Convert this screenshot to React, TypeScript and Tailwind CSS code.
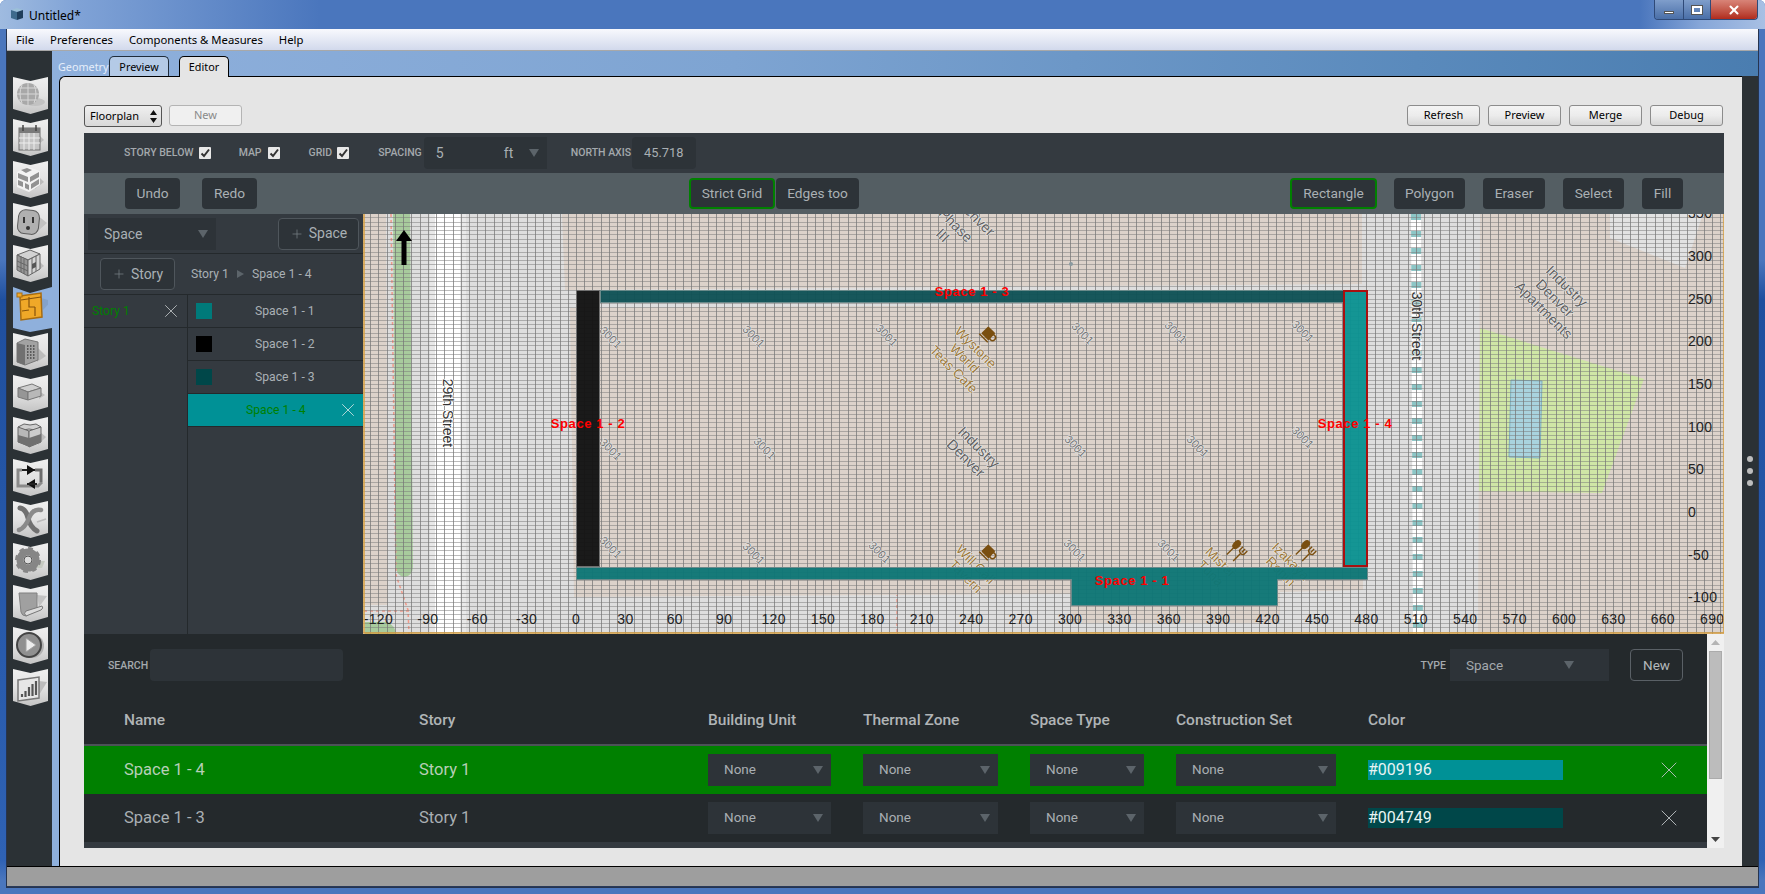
import { X, Plus } from 'lucide-react'
import type { ReactNode } from 'react'

const Tri = ({ className = '' }: { className?: string }) => (
  <svg width="10" height="8" viewBox="0 0 10 8" className={className}>
    <path d="M0 0h10L5 8z" fill="#5c646a" />
  </svg>
)

function ToolBtn({ children, active, className = '' }: { children: ReactNode; active?: boolean; className?: string }) {
  return (
    <div className={`h-[31px] flex items-center justify-center rounded-[4px] bg-[#2d3338] text-[13.7px] text-[#aab0b4] ${active ? 'border-2 border-[#008000]' : ''} ${className}`}>
      {children}
    </div>
  )
}

function WinBtn({ children }: { children: ReactNode }) {
  return (
    <div className="w-[73px] h-[21px] flex items-center justify-center rounded-[3px] border border-[#8c8c8c] bg-gradient-to-b from-[#f4f4f4] via-[#ececec] to-[#d6d6d6] text-[11px] text-black">
      {children}
    </div>
  )
}

function Check() {
  return (
    <div className="w-[12px] h-[12px] bg-[#e8e8e8] rounded-[1px] flex items-center justify-center">
      <svg width="10" height="10" viewBox="0 0 10 10">
        <path d="M1.5 5.5l2.5 2.5 5-6.5" fill="none" stroke="#333" strokeWidth="2" />
      </svg>
    </div>
  )
}

const Label = ({ children, className = '' }: { children: ReactNode; className?: string }) => (
  <span className={`text-[10.5px] font-medium text-[#a4a9ad] whitespace-nowrap ${className}`}>{children}</span>
)

function Drop({ className }: { className: string }) {
  return (
    <div className={`h-[32px] bg-[#2d3338] flex items-center justify-between pl-[16px] pr-[8px] pb-[1px] text-[13.5px] text-[#a9afb3] ${className}`}>
      None
      <Tri />
    </div>
  )
}

function TableRow({ name, color, bar, active }: { name: string; color: string; bar: string; active?: boolean }) {
  return (
    <div className={`h-[48px] grid grid-cols-[295px_289px_155px_167px_146px_192px_1fr] items-center pl-[40px] text-[16.5px] ${active ? 'bg-[#008000] text-[#b7cfb7]' : 'bg-[#24292c] text-[#a9afb3]'}`}>
      <div>{name}</div>
      <div>Story 1</div>
      <Drop className="w-[123px]" />
      <Drop className="w-[135px]" />
      <Drop className="w-[114px]" />
      <Drop className="w-[160px]" />
      <div className="flex items-center">
        <div className={`w-[195px] h-[20px] text-[16px] leading-[20px] text-[#e8f4f4] ${bar}`}>{color}</div>
        <X size={28} strokeWidth={0.8} className="ml-[92px] text-[#b9bdbf]" />
      </div>
    </div>
  )
}

const shadow = <path d="M22 12l9 9-9 7z" fill="#bcbcbc" />

const icons: ReactNode[] = [
  <>
    <ellipse cx="22" cy="25" rx="10" ry="4" fill="#c2c2c2" />
    <circle cx="15" cy="17" r="11" fill="#a8a8a8" />
    <path d="M4 17h22M6 11h18M6 23h18M15 6v22M9 8q-4 9 0 18M21 8q4 9 0 18" fill="none" stroke="#d8d8d8" strokeWidth="1" />
  </>,
  <>
    {shadow}
    <rect x="6" y="9" width="21" height="22" fill="#c4c4c4" stroke="#6e6e6e" />
    <rect x="6" y="9" width="21" height="5" fill="#7a7a7a" />
    <path d="M6 19h21M6 24h21M11 14v17M16 14v17M21 14v17" stroke="#eee" />
    <path d="M10 6v6M23 6v6" stroke="#444" strokeWidth="1.5" />
  </>,
  <>
    {shadow}
    <path d="M4 11l11-5 12 4v14l-11 7-12-5z" fill="#f3f3f3" />
    <path d="M5 12l10 4v5L5 17zM17 16l9-5v5l-9 5zM5 19l5 2v5l-5-2zM12 22l4 2v5l-4-2zM18 23l8-5v5l-8 5zM8 9l6-2 5 2-6 3z" fill="#929292" />
  </>,
  <>
    <path d="M24 12l10 8-9 8z" fill="#c2c2c2" />
    <rect x="5" y="7" width="21" height="24" rx="7" fill="#b0b0b0" stroke="#5c5c5c" transform="rotate(6 15 19)" />
    <path d="M11 14v6M20 14v6" stroke="#333" strokeWidth="2" />
    <circle cx="15" cy="25" r="2" fill="#333" />
  </>,
  <>
    {shadow}
    <path d="M4 10l13-5 10 4-12 6z" fill="#d2d2d2" stroke="#666" />
    <path d="M4 10l11 5v16L4 25z" fill="#969696" stroke="#666" />
    <path d="M15 15l12-6v15l-12 7z" fill="#d4d4d4" stroke="#666" />
    <path d="M8 12v15M11 14v15M4 16l11 5M4 21l11 5M19 13v16M23 11v15" stroke="#666" />
    <path d="M19 19l4-2v5l-4 2z" fill="#555" />
  </>,
  <>
    <path d="M28 11l10 3-8 9z" fill="#7f9cc2" opacity="0.7" />
    <path d="M7 9l21-3 1 24-21 3z" fill="#f0a828" stroke="#a86c10" strokeWidth="1.5" />
    <path d="M8 13l20-3M16 10v10h6M22 20v9M9 24l7-1" fill="none" stroke="#86530c" strokeWidth="1.2" />
    <rect x="4" y="6" width="5" height="4" fill="#f0a828" stroke="#a86c10" />
  </>,
  <>
    <path d="M24 14l9 9-9 6z" fill="#bcbcbc" />
    <path d="M4 10l8-4 13 3v18l-13 5-8-3z" fill="#a2a2a2" stroke="#777" />
    <path d="M4 10l8 2v20l-8-3z" fill="#707070" />
    <path d="M14 13h9M14 16h9M14 19h9M14 22h9M14 25h9" stroke="#444" strokeWidth="1.5" strokeDasharray="1.5 1.5" />
  </>,
  <>
    <path d="M26 16l6 4-6 4z" fill="#bcbcbc" />
    <path d="M5 13l14-4 9 4-13 4z" fill="#cfcfcf" stroke="#777" />
    <path d="M5 13l10 4v8L5 22z" fill="#969696" stroke="#777" />
    <path d="M15 17l13-4v8l-13 4z" fill="#b8b8b8" stroke="#777" />
  </>,
  <>
    <path d="M26 14l7 6-8 8z" fill="#bcbcbc" />
    <path d="M5 10l6-3 6 1 6-1 5 3-6 3-6-1-6 1z" fill="#cfcfcf" stroke="#666" />
    <path d="M5 10l11 4v15L5 25z" fill="#b8b8b8" stroke="#666" />
    <path d="M16 14l12-4v15l-12 5z" fill="#cccccc" stroke="#666" />
    <path d="M5 18l11 3 12-4v8l-12 5-11-5z" fill="#707070" />
  </>,
  <>
    <path d="M9 11H5v16h20l4-4" fill="none" stroke="#8a8a8a" strokeWidth="3" />
    <path d="M22 11h6v12" fill="none" stroke="#6c6c6c" strokeWidth="3" />
    <path d="M9 11h13" stroke="#222" strokeWidth="2" />
    <path d="M14 6l8 5-8 5zM22 20l-8 5 8 5z" fill="#111" />
    <path d="M14 25h10" stroke="#222" strokeWidth="2" />
  </>,
  <>
    <path d="M7 7q6 1 8 10t9 13" fill="none" stroke="#707070" strokeWidth="5" strokeLinecap="round" />
    <path d="M28 9q-8-2-12 8T6 29" fill="none" stroke="#8a8a8a" strokeWidth="4.5" strokeLinecap="round" />
    <path d="M24 21l9-3" stroke="#bbb" strokeWidth="1.5" />
  </>,
  <>
    <path d="M18 18h14l-3 7H18z" fill="#c6cac2" />
    <circle cx="15" cy="17" r="8" fill="none" stroke="#868686" strokeWidth="7" />
    <circle cx="15" cy="17" r="11" fill="none" stroke="#868686" strokeWidth="4" strokeDasharray="4.5 4.1" />
    <circle cx="15" cy="17" r="4" fill="#dcdcdc" stroke="#555" />
  </>,
  <>
    <path d="M24 10l10 1-8 11z" fill="#c2c2c2" />
    <path d="M6 8h18v17l-11 6q-4 0-5-4z" fill="#a0a0a0" stroke="#808080" />
    <path d="M13 31q-3-3 0-5l16-5q2 2-1 4z" fill="#dcdcdc" stroke="#777" />
  </>,
  <>
    <circle cx="19" cy="19" r="12" fill="#b2b2b2" />
    <circle cx="16" cy="18" r="12" fill="#909090" stroke="#444" strokeWidth="2" />
    <path d="M13 11l10 7-10 7z" fill="#ededed" stroke="#a0a0a0" />
  </>,
  <>
    <path d="M26 12l8 1-8 13z" fill="#bcbcbc" />
    <path d="M5 11l21-3v21l-21 3z" fill="#e6e6e6" stroke="#777" strokeWidth="1.5" />
    <path d="M9 28v-3M12.500 28v-6M16 27v-9M19.500 27v-12M23 26v-14" stroke="#555" strokeWidth="2.2" />
  </>,
]

function Sidebar() {
  return (
    <div className="w-[45px] shrink-0 bg-[#2b3135] pl-[6px] pt-[26px]">
      {icons.map((icon, i) =>
        i === 5 ? (
          <div key={i} className="w-[39px] h-[46px] -mt-[4px] bg-[#8fb0dc] [clip-path:polygon(0_0,17px_6px,39px_0,39px_41px,17px_45px,0_41px)]">
            <svg width="35" height="37" viewBox="0 0 35 37" className="mt-[4px]">{icon}</svg>
          </div>
        ) : (
          <div key={i} className="h-[42px]">
            <div className="w-[35px] h-[37px] bg-gradient-to-b from-[#efefef] via-[#e2e2e2] to-[#c4c4c4] [clip-path:polygon(0_0,50%_4px,100%_0,100%_32px,50%_37px,0_32px)]">
              <svg width="35" height="37" viewBox="0 0 35 37">{icon}</svg>
            </div>
          </div>
        ),
      )}
    </div>
  )
}

const gridX = Array.from({ length: 170 }, (_, i) => Math.round(576 + (i - 26) * 8.233) + 0.5)
const gridY = Array.from({ length: 100 }, (_, i) => Math.round(512 + (i - 70) * 4.27) + 0.5)
const xLabels = Array.from({ length: 28 }, (_, i) => -120 + i * 30)
const yLabels = [350, 300, 250, 200, 150, 100, 50, 0, -50, -100]
const numbers = [[610, 338], [753, 337], [610, 450], [764, 449], [610, 548], [753, 554], [886, 336], [1082, 334], [1175, 333], [1302, 332], [1075, 447], [1197, 447], [1302, 438], [879, 553], [1074, 551], [1168, 551]]

const brown: [string, number, number][] = [
  ['Wystone', 975, 348], ['World', 964, 359], ['Teas Cafe', 953, 370],
  ['Will Call', 975, 565], ['Tavern', 965, 577],
  ['Mister', 1220, 563], ['Tuna', 1210, 574],
  ['Izakaya', 1290, 562], ['Ronin', 1280, 572],
]
const grey: [string, number, number][] = [
  ['Industry', 978, 448], ['Denver', 965, 459],
  ['Industry', 1566, 287], ['Denver', 1554, 299], ['Apartments', 1543, 311],
  ['Denver', 975, 218], ['Phase', 955, 226], ['III', 942, 236],
]
const spaces: [string, number, number][] = [
  ['Space 1 - 2', 588, 428], ['Space 1 - 3', 972, 296], ['Space 1 - 4', 1355, 428], ['Space 1 - 1', 1132, 585],
]

const Cup = ({ x, y }: { x: number; y: number }) => (
  <g transform={`translate(${x} ${y}) rotate(45)`} fill="#7a4f10">
    <rect x="-6" y="-5" width="10" height="10" rx="1" />
    <circle cx="5" cy="0" r="3" fill="none" stroke="#7a4f10" strokeWidth="1.5" />
    <rect x="-7" y="6" width="12" height="1.5" />
  </g>
)
const Fork = ({ x, y }: { x: number; y: number }) => (
  <g transform={`translate(${x} ${y}) rotate(45)`} stroke="#7a4f10" fill="#7a4f10">
    <ellipse cx="-4" cy="-5" rx="3" ry="4.500" />
    <path d="M-4 -1v10M5 -1v10M2 -8v5q3 3 6 0v-5M5 -8v5" strokeWidth="1.4" fill="none" />
  </g>
)

function MapCanvas() {
  return (
    <svg width="1361" height="420" viewBox="363 214 1361 420" className="block font-['Liberation_Sans',sans-serif]">
      <rect x="363" y="214" width="1361" height="420" fill="#dedede" />
      <path d="M363 214h23l2 391h-25z" fill="#dcd2ca" />
      <rect x="430" y="214" width="36" height="420" fill="#e8e8e8" />
      <rect x="435" y="214" width="25" height="420" fill="#fff" />
      <path d="M393 214h17l3 353a8.500 10 0 0 1-17 0z" fill="#a8cb9d" />
      <path d="M365 634v-12h22q8 3 9 12z" fill="#a8cb9d" />
      <path d="M391 214l5 361 12 35 1 24M364 611h46M897 593v41" fill="none" stroke="#f09a8a" strokeWidth="1.500" strokeDasharray="3 3" />
      <path d="M562 214h800v70l-797 6z" fill="#dcd2ca" />
      <path d="M570 308l793-5v287l-83 2v31h-209v-29l-497 3z" fill="#dcd2ca" />
      <path d="M1480 214h244v420h-246z" fill="#dcd2ca" />
      <path d="M1610 214v24l75 30 18-54z" fill="#e2e2e2" />
      <path d="M1480 328l164 51-42 114-123-2z" fill="#cfe6a6" />
      <path d="M1511 380l31 1-2 77-31-1z" fill="#a9d3de" stroke="#7fb0c0" />
      <path d="M1416 214l2 420" stroke="#fff" strokeWidth="10" />
      <path d="M1416 214l2 420" stroke="#8cc6c6" strokeWidth="10" strokeDasharray="6 11" />
      <g stroke="#777" strokeWidth="1">
        {gridX.map((x) => <line key={x} x1={x} x2={x} y1="214" y2="634" strokeOpacity="0.75" />)}
        {gridY.map((y) => <line key={y} x1="363" x2="1724" y1={y} y2={y} strokeOpacity="0.5" />)}
      </g>
      {numbers.map(([x, y], i) => (
        <text key={i} x={x} y={y} fontSize="11.500" fill="#747474" textAnchor="middle" dominantBaseline="middle" transform={`rotate(45 ${x} ${y})`} stroke="#eee" strokeWidth="1" paintOrder="stroke">3001</text>
      ))}
      {brown.map(([t, x, y], i) => (
        <text key={i} x={x} y={y} fontSize="13.500" fill="#9c7838" textAnchor="middle" dominantBaseline="middle" transform={`rotate(45 ${x} ${y})`} stroke="#eee" strokeWidth="1" paintOrder="stroke">{t}</text>
      ))}
      {grey.map(([t, x, y], i) => (
        <text key={i} x={x} y={y} fontSize="14.500" fill="#606060" textAnchor="middle" dominantBaseline="middle" transform={`rotate(45 ${x} ${y})`} stroke="#eee" strokeWidth="1" paintOrder="stroke">{t}</text>
      ))}
      <Cup x={989} y={334} />
      <Cup x={989} y={552} />
      <Fork x={1236} y={551} />
      <Fork x={1305} y={551} />
      <circle cx="1071" cy="264" r="2" fill="#8a9aa0" />
      <text x="447" y="413" fontSize="14" fill="#333" textAnchor="middle" dominantBaseline="middle" transform="rotate(90 447 413)" stroke="#fff" strokeWidth="1.500" paintOrder="stroke">29th Street</text>
      <text x="1416" y="326" fontSize="14" fill="#333" textAnchor="middle" dominantBaseline="middle" transform="rotate(90 1416 326)" stroke="#e8e8e8" strokeWidth="1.500" paintOrder="stroke">30th Street</text>
      <rect x="576.500" y="290.500" width="23" height="276" fill="#141414" fillOpacity="0.97" stroke="#707070" />
      <rect x="600.500" y="290.500" width="743" height="12" fill="#0f5155" fillOpacity="0.96" stroke="#6a8a8a" />
      <path d="M576.500 567.500h791v12h-90v26h-206v-26h-495z" fill="#0e7676" fillOpacity="0.96" stroke="#6a8a8a" />
      <rect x="1344" y="291" width="23" height="275" fill="#0b9292" fillOpacity="0.96" stroke="#a81010" strokeWidth="2" />
      <path d="M401.500 265v-24h-5.500l8-11 8 11h-5.500v24z" fill="#000" />
      {spaces.map(([t, x, y]) => (
        <text key={t} x={x} y={y} fontSize="13" fontWeight="700" letterSpacing="0.6" fill="#ff0000" textAnchor="middle">{t}</text>
      ))}
      {xLabels.map((v) => (
        <text key={v} x={576 + v * 1.6467} y="624" fontSize="14" fill="#222" textAnchor="middle" letterSpacing="0.3">{v}</text>
      ))}
      {yLabels.map((v) => (
        <text key={v} x="1688" y={517 - v * 0.854} fontSize="14" fill="#222" letterSpacing="0.3">{v}</text>
      ))}
      <path d="M364 214v419h1360V214" fill="none" stroke="#d8a040" strokeWidth="1.500" />
    </svg>
  )
}

function LeftPanel() {
  return (
    <div className="w-[279px] shrink-0 bg-[#343a40] flex flex-col text-[#a9b0b5]">
      <div className="h-[40px] flex items-center justify-between pl-[4px] pr-[4px] border-b border-[#24292c]">
        <div className="w-[128px] h-[32px] bg-[#2d3338] flex items-center justify-between pl-[16px] pr-[8px] pt-[1px] text-[14px]">
          Space
          <Tri />
        </div>
        <div className="w-[81px] h-[32px] rounded-[4px] border border-[#4f565c] bg-[#2d3338] flex items-center justify-center gap-[5px] text-[14px]">
          <Plus size={14} strokeWidth={1.2} className="text-[#7d848a]" />
          Space
        </div>
      </div>
      <div className="h-[41px] flex items-center pl-[16px] border-b border-[#24292c] text-[12.2px]">
        <div className="w-[75px] h-[32px] rounded-[4px] border border-[#4f565c] bg-[#2d3338] flex items-center justify-center gap-[5px] text-[14px]">
          <Plus size={14} strokeWidth={1.2} className="text-[#7d848a]" />
          Story
        </div>
        <span className="ml-[16px]">Story 1</span>
        <svg width="7" height="8" viewBox="0 0 7 8" className="ml-[8px]"><path d="M0 0l7 4-7 4z" fill="#5c646a" /></svg>
        <span className="ml-[8px]">Space 1 - 4</span>
      </div>
      <div className="flex flex-1">
        <div className="w-[104px] border-r border-[#24292c]">
          <div className="h-[33px] flex items-center justify-between pl-[8px] pr-[5px] border-b border-[#24292c] text-[12.2px] text-[#008000]">
            Story 1
            <X size={22} strokeWidth={0.9} className="text-[#c4c8ca]" />
          </div>
        </div>
        <div className="flex-1 text-[12.2px]">
          {[['Space 1 - 1', 'bg-[#007a7a]'], ['Space 1 - 2', 'bg-black'], ['Space 1 - 3', 'bg-[#004749]']].map(([t, c]) => (
            <div key={t} className="h-[33px] flex items-center pl-[8px] border-b border-[#24292c]">
              <div className={`w-[16px] h-[16px] ${c}`} />
              <span className="ml-[43px]">{t}</span>
            </div>
          ))}
          <div className="h-[33px] flex items-center pr-[4px] bg-[#009196] border-b border-[#24292c] text-[#008000]">
            <span className="ml-[58px]">Space 1 - 4</span>
            <X size={22} strokeWidth={0.9} className="ml-auto text-[#d5e6e6]" />
          </div>
        </div>
      </div>
    </div>
  )
}

function TablePanel() {
  return (
    <div className="flex h-[214px]">
      <div className="w-[1623px] bg-[#24292c] flex flex-col font-[Roboto,sans-serif]">
        <div className="h-[48px] mt-[15px] shrink-0 flex items-start text-[#a4a9ad]">
          <Label className="ml-[24px] mt-[9px]">SEARCH</Label>
          <div className="ml-[2px] w-[193px] h-[32px] rounded-[4px] bg-[#2d3338]" />
          <Label className="ml-auto mt-[9px]">TYPE</Label>
          <div className="ml-[4px] w-[159px] h-[32px] bg-[#2d3338] flex items-center justify-between pl-[16px] pr-[35px] text-[13.5px]">
            Space
            <Tri />
          </div>
          <div className="ml-[21px] mr-[24px] w-[53px] h-[32px] rounded-[4px] border border-[#5a6066] flex items-center justify-center text-[13.5px] text-[#b4b9bc]">New</div>
        </div>
        <div className="h-[49px] pt-[1px] shrink-0 grid grid-cols-[295px_289px_155px_167px_146px_192px_1fr] items-center pl-[40px] text-[15.5px] font-medium text-[#b0b4b6] border-b-2 border-[#4c5257]">
          <div>Name</div>
          <div>Story</div>
          <div>Building Unit</div>
          <div>Thermal Zone</div>
          <div>Space Type</div>
          <div>Construction Set</div>
          <div>Color</div>
        </div>
        <TableRow name="Space 1 - 4" color="#009196" bar="bg-[#009196]" active />
        <TableRow name="Space 1 - 3" color="#004749" bar="bg-[#004749]" />
        <div className="h-[6px] bg-[#343a40]" />
      </div>
      <div className="w-[17px] bg-[#f0f0f0] flex flex-col items-center pt-[6px]">
        <svg width="9" height="5" viewBox="0 0 9 5"><path d="M4.500 0l4.500 5H0z" fill="#b4b4b4" /></svg>
        <div className="w-[13px] h-[128px] mt-[6px] bg-[#bcbcbc] border border-[#ababab]" />
        <svg width="9" height="5" viewBox="0 0 9 5" className="mt-[58px]"><path d="M0 0h9L4.500 5z" fill="#444" /></svg>
      </div>
    </div>
  )
}

export default function App() {
  return (
    <div className="w-[1765px] h-[894px] overflow-hidden flex flex-col bg-[linear-gradient(180deg,#4a76bd_0,#4a76bd_260px,#1f4f9e_300px,#2f62b4_860px,#4a76bd_880px)] font-['Noto_Sans',sans-serif] rounded-t-[6px]">
      <div className="h-[29px] shrink-0 relative flex items-center bg-[linear-gradient(90deg,#9fbbe0_0,#7fa2d6_80px,#4a76bd_320px,#4a76bd_1640px,#86a6d8_1700px,#a8c0e4_100%)]">
        <svg width="14" height="14" viewBox="0 0 14 14" className="ml-[10px] mb-[1px]">
          <path d="M1 3l6-2 6 2-6 2z" fill="#9cc0d8" />
          <path d="M1 3l6 2v8L1 11z" fill="#3e6a8c" />
          <path d="M13 3L7 5v8l6-2z" fill="#1f3e5c" />
        </svg>
        <span className="ml-[5px] pt-[2px] text-[12px] text-black">Untitled*</span>
        <div className="ml-auto mr-[7px] -mt-[9px] h-[20px] flex rounded-b-[4px] border border-t-0 border-[#2f4a78] overflow-hidden">
          <div className="w-[29px] bg-gradient-to-b from-[#7f9ecb] to-[#4a6fa8] flex items-center justify-center border-r border-[#2f4a78]">
            <div className="w-[10px] h-[3px] mt-[6px] bg-white border border-[#555]" />
          </div>
          <div className="w-[27px] bg-gradient-to-b from-[#7f9ecb] to-[#4a6fa8] flex items-center justify-center border-r border-[#2f4a78]">
            <div className="w-[10px] h-[8px] border-2 border-white outline outline-1 outline-[#555]" />
          </div>
          <div className="w-[46px] bg-gradient-to-b from-[#d88478] to-[#b02a1c] flex items-center justify-center">
            <X size={14} strokeWidth={3.5} className="text-white" />
          </div>
        </div>
      </div>
      <div className="flex-1 mx-[7px] flex flex-col min-h-0 outline outline-1 outline-[#26344f]">
        <div className="h-[22px] shrink-0 flex items-center gap-[16px] pl-[9px] pt-[2px] bg-gradient-to-b from-[#f8f9fd] to-[#d2d9ec] border-b border-[#a8a8a8] text-[11.3px] text-black">
          <span>File</span>
          <span>Preferences</span>
          <span>Components &amp; Measures</span>
          <span>Help</span>
        </div>
        <div className="h-[815px] shrink-0 flex">
          <Sidebar />
          <div className="flex-1 flex flex-col bg-[#8fb0dc] min-w-0">
            <div className="h-[25px] shrink-0 flex items-end pl-[6px] bg-[linear-gradient(90deg,#8fb0dc_0,#7ea4d2_40%,#5a8abc_80%,#4a7db0_100%)] text-[10.8px]">
              <span className="w-[51px] pb-[1px] whitespace-nowrap text-[#e6eefa]">Geometry</span>
              <div className="w-[60px] h-[20px] pt-[1px] rounded-t-[5px] border border-b-0 border-[#1f2c3a] bg-[#b4cae6] flex items-center justify-center text-black">Preview</div>
              <div className="ml-[10px] -mb-[1px] pt-[1px] z-10 w-[50px] h-[21px] rounded-t-[5px] border border-b-0 border-black bg-[#e5e5e5] flex items-center justify-center text-black">Editor</div>
            </div>
            <div className="flex-1 min-h-0 ml-[7px] flex">
              <div className="flex-1 min-w-0 rounded-tl-[6px] border-l border-t border-black bg-[#e5e5e5] pl-[24px] pr-[18px] pt-[28px]">
                <div className="h-[22px] flex items-start">
                  <div className="w-[78px] h-[22px] pt-[1px] rounded-[3px] border border-[#555] bg-gradient-to-b from-[#f0f0f0] to-[#d8d8d8] flex items-center justify-between pl-[5px] pr-[4px] text-[11px] text-black">
                    Floorplan
                    <svg width="7" height="13" viewBox="0 0 7 13"><path d="M3.500 0L7 5H0zM3.500 13L0 8h7z" fill="#111" /></svg>
                  </div>
                  <div className="ml-[7px] w-[73px] h-[21px] rounded-[3px] border border-[#b4b4b4] bg-[#f0f0f0] flex items-center justify-center text-[11px] text-[#8a8a8a]">New</div>
                  <div className="ml-auto mr-[1px] flex gap-[8px]">
                    <WinBtn>Refresh</WinBtn>
                    <WinBtn>Preview</WinBtn>
                    <WinBtn>Merge</WinBtn>
                    <WinBtn>Debug</WinBtn>
                  </div>
                </div>
                <div className="mt-[6px] w-[1640px] font-[Roboto,sans-serif]">
                  <div className="h-[40px] flex items-center bg-[#343a40] pl-[40px]">
                    <Label className="mr-[5px]">STORY BELOW</Label>
                    <Check />
                    <Label className="ml-[28px] mr-[6px]">MAP</Label>
                    <Check />
                    <Label className="ml-[29px] mr-[5px]">GRID</Label>
                    <Check />
                    <Label className="ml-[29px] mr-[2px]">SPACING</Label>
                    <div className="w-[64px] h-[32px] rounded-l-[4px] bg-[#2d3338] flex items-center pl-[12px] text-[14px] text-[#a9afb3]">5</div>
                    <div className="w-[59px] h-[32px] bg-[#2d3338] flex items-center justify-between pl-[16px] pr-[8px] text-[14px] text-[#a9afb3]">
                      ft
                      <Tri />
                    </div>
                    <Label className="ml-[24px] mr-[1px]">NORTH AXIS</Label>
                    <div className="w-[64px] h-[32px] rounded-[4px] bg-[#2d3338] flex items-center pl-[12px] text-[12.8px] text-[#a9afb3]">45.718</div>
                  </div>
                  <div className="h-[41px] flex items-center bg-[#545e63] pl-[41px] pr-[41px]">
                    <ToolBtn className="w-[55px]">Undo</ToolBtn>
                    <ToolBtn className="w-[55px] ml-[22px]">Redo</ToolBtn>
                    <ToolBtn active className="w-[86px] ml-[432px]">Strict Grid</ToolBtn>
                    <ToolBtn className="w-[83px] ml-[1px]">Edges too</ToolBtn>
                    <ToolBtn active className="w-[87px] ml-auto">Rectangle</ToolBtn>
                    <ToolBtn className="w-[71px] ml-[17px]">Polygon</ToolBtn>
                    <ToolBtn className="w-[62px] ml-[18px]">Eraser</ToolBtn>
                    <ToolBtn className="w-[61px] ml-[18px]">Select</ToolBtn>
                    <ToolBtn className="w-[41px] ml-[18px]">Fill</ToolBtn>
                  </div>
                  <div className="h-[420px] flex">
                    <LeftPanel />
                    <MapCanvas />
                  </div>
                  <TablePanel />
                </div>
              </div>
              <div className="w-[16px] shrink-0 bg-[#2b3135] flex flex-col items-center justify-center gap-[6px]">
                <div className="w-[6px] h-[6px] rounded-full bg-[#bdbdbd]" />
                <div className="w-[6px] h-[6px] rounded-full bg-[#bdbdbd]" />
                <div className="w-[6px] h-[6px] rounded-full bg-[#bdbdbd]" />
              </div>
            </div>
          </div>
        </div>
        <div className="h-[21px] shrink-0 bg-[#9e9e9e] border-t border-black border-b border-b-[#2a3a58]" />
      </div>
      <div className="h-[7px] shrink-0" />
    </div>
  )
}
